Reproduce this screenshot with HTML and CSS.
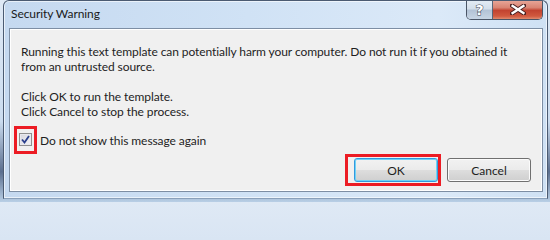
FILE: index.html
```html
<!DOCTYPE html>
<html>
<head>
<meta charset="utf-8">
<link rel="stylesheet" href="styles.css">
</head>
<body>
<div class="window">
  <div class="titlebar">
    <span class="title">Security Warning</span>
    <div class="caption-buttons">
      <span class="cap-btn help">?</span>
      <span class="cap-btn close">
        <svg width="16" height="11" viewBox="0 0 16 11">
          <path d="M2 1.5 L14 9.5 M14 1.5 L2 9.5" stroke="#4a2020" stroke-width="4.2" stroke-linecap="square"/>
          <path d="M2.6 2 L13.4 9 M13.4 2 L2.6 9" stroke="#ffffff" stroke-width="2.4" stroke-linecap="square"/>
        </svg>
      </span>
    </div>
  </div>
  <div class="panel">
    <p class="msg">Running this text template can potentially harm your computer. Do not run it if you obtained it<br>from an untrusted source.</p>
    <p class="msg">Click OK to run the template.<br>Click Cancel to stop the process.</p>
    <div class="check-row">
      <span class="mark">
        <span class="checkbox">
          <svg width="9" height="9" viewBox="0 0 9 9"><path d="M1 4.5 L3.5 7.5 L8 1" fill="none" stroke="#2a3f8c" stroke-width="1.8"/></svg>
        </span>
      </span>
      <span class="check-label">Do not show this message again</span>
    </div>
    <div class="buttons">
      <span class="mark mark-ok"><button class="btn default">OK</button></span>
      <button class="btn">Cancel</button>
    </div>
  </div>
</div>
</body>
</html>
```
FILE: styles.css
```css
html, body {
  margin: 0;
  padding: 0;
}
body {
  width: 550px;
  height: 202px;
  overflow: hidden;
  background: linear-gradient(180deg, #dfe9f5 0%, #cbdcef 60%, #5b6f8f 85%, #b9cfe6 100%);
  font-family: Lato, "Noto Sans", sans-serif;
  font-size: 12px;
  letter-spacing: -0.08px;
  color: #1e1e1e;
}
.window {
  margin-left: 3px;
  width: 545px;
  height: 199px;
  box-sizing: border-box;
  border: 1px solid #4b5b72;
  border-bottom: 1px solid #8aa0ba;
  border-radius: 6px 6px 0 0;
  background: linear-gradient(90deg, #c5d9f0 0%, #d0e2f5 45%, #dbe9f8 80%, #cfe1f4 100%);
  box-shadow: inset 0 0 0 1px rgba(255,255,255,0.6);
  display: flex;
  flex-direction: column;
  overflow: hidden;
}
.titlebar {
  height: 27px;
  flex: none;
  display: flex;
  align-items: flex-start;
  justify-content: space-between;
}
.title {
  margin: 5px 0 0 7px;
  font-size: 12px;
  color: #1a1a1a;
}
.caption-buttons {
  display: flex;
  margin-right: 4px;
  margin-top: -1px;
  border: 1px solid #4a5566;
  border-top: none;
  border-radius: 0 0 5px 5px;
  overflow: hidden;
  height: 19px;
}
.cap-btn {
  display: flex;
  align-items: center;
  justify-content: center;
  height: 19px;
}
.help {
  width: 25px;
  border-right: 1px solid #5a6678;
  background: linear-gradient(180deg, #e4ecf5 0%, #d4dfeb 45%, #b3c3d6 55%, #c7d5e4 100%);
  color: #ffffff;
  font-family: "DejaVu Sans", sans-serif;
  font-weight: bold;
  font-size: 14px;
  -webkit-text-stroke: 1px #3c4656;
  paint-order: stroke fill;
}
.close {
  width: 49px;
  background: linear-gradient(180deg, #e9a99b 0%, #d98473 40%, #c24330 55%, #d1593f 85%, #e08a6e 100%);
}
.panel {
  flex: 1;
  min-height: 0;
  margin: 0 4px 6px 5px;
  box-sizing: border-box;
  border: 1px solid #7d8ea4;
  box-shadow: inset 0 0 0 1px #ffffff;
  background: #f0f0f0;
  padding: 15px 11px 8px 11px;
  display: flex;
  flex-direction: column;
}
.msg {
  margin: 0 0 15px 0;
  line-height: 15px;
  white-space: nowrap;
}
.check-row {
  display: flex;
  align-items: center;
  margin-top: -8px;
  margin-left: -7px;
  white-space: nowrap;
}
.mark {
  display: inline-flex;
  border: 3px solid #ec1c24;
}
.check-row .mark {
  padding: 4px 2px 5px 2px;
}
.checkbox {
  width: 11px;
  height: 11px;
  border: 1px solid #8f8f8f;
  background: linear-gradient(135deg, #d6d6de 0%, #f4f4f6 100%);
  box-shadow: inset 0 0 0 1px #e8e8ee;
  display: flex;
  align-items: center;
  justify-content: center;
}
.check-label {
  margin-left: 3px;
}
.buttons {
  display: flex;
  justify-content: flex-end;
  align-items: center;
  margin-top: auto;
  margin-bottom: 1px;
  gap: 6px;
}
.mark-ok {
  padding: 1px 0 1px 6px;
}
.btn {
  width: 84px;
  height: 24px;
  box-sizing: border-box;
  border: 1px solid #707070;
  border-radius: 3px;
  background: linear-gradient(180deg, #f2f2f2 0%, #ebebeb 48%, #dddddd 52%, #cfcfcf 100%);
  box-shadow: inset 0 0 0 1px #fbfbfb;
  font-family: inherit;
  font-size: 12px;
  color: #1e1e1e;
  padding: 0;
}
.btn.default {
  border-color: #3399dd;
  box-shadow: inset 0 0 0 1px #6fd3f7;
}
```
